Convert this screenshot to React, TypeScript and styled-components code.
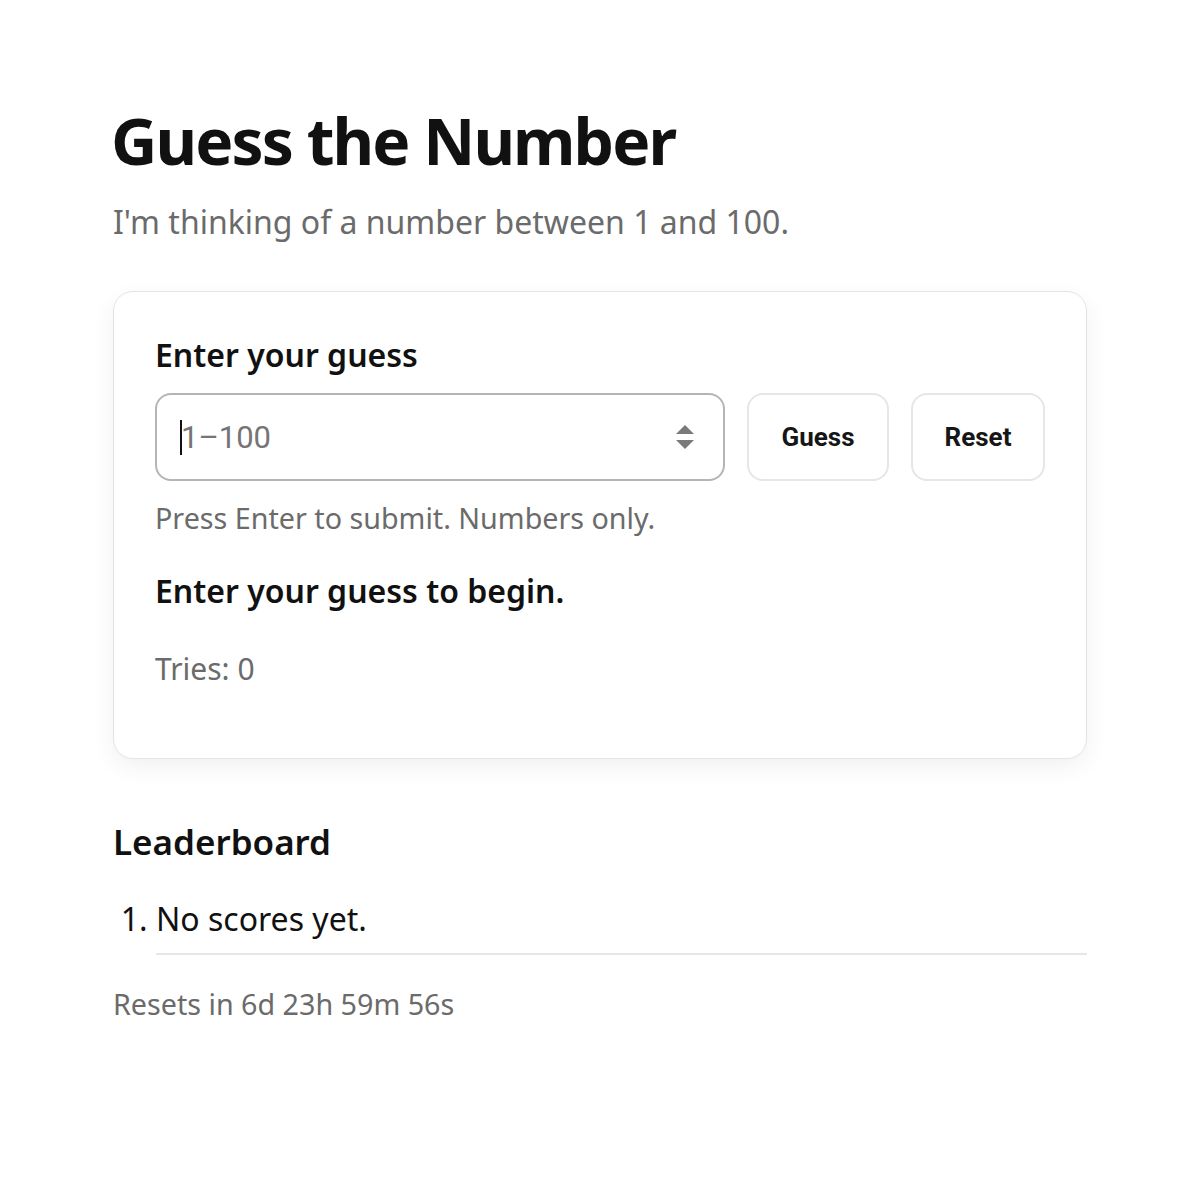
import React from 'react'
import styled, { createGlobalStyle } from 'styled-components'

const Global = createGlobalStyle`
  * { box-sizing: border-box; }
  body {
    margin: 0;
    background: #ffffff;
    color: #111111;
    font-family: "Noto Sans", "DejaVu Sans", sans-serif;
  }
`

export default function App() {
  return (
    <>
      <Global />
      <Page>
        <Title>Guess the Number</Title>
        <Subtitle>I'm thinking of a number between 1 and 100.</Subtitle>

        <Card>
          <Label htmlFor="guess">Enter your guess</Label>
          <Row>
            <Field>
              <Input id="guess" type="text" inputMode="numeric" placeholder="1–100" />
              <Caret />
              <Spinner width="20" height="30" viewBox="0 0 20 30">
                <path d="M10 3 L19 12 L1 12 Z" fill="#7a7a7a" />
                <path d="M1 18 L19 18 L10 27 Z" fill="#7a7a7a" />
              </Spinner>
            </Field>
            <Button $w={142}>Guess</Button>
            <Button $w={134}>Reset</Button>
          </Row>
          <Hint>Press Enter to submit. Numbers only.</Hint>
          <Status>Enter your guess to begin.</Status>
          <Tries>Tries: 0</Tries>
        </Card>

        <Heading>Leaderboard</Heading>
        <List>
          <Item>No scores yet.</Item>
        </List>
        <Countdown>Resets in 6d 23h 59m 56s</Countdown>
      </Page>
    </>
  )
}

const Page = styled.main`
  width: 974px;
  margin: 0 auto;
  padding-top: 101px;
  display: flex;
  flex-direction: column;
`

const Title = styled.h1`
  margin: 0 0 0 -2px;
  font-size: 64px;
  line-height: 80px;
  font-weight: 700;
  letter-spacing: -1.9px;
  color: #111;
`

const Subtitle = styled.p`
  margin: 18px 0 0;
  font-size: 32px;
  line-height: 45px;
  color: #6b6b6b;
`

const Card = styled.section`
  margin-top: 47px;
  border: 1px solid #e4e4e4;
  border-radius: 20px;
  padding: 42px 41px 68px;
  background: #fff;
  box-shadow: 0 8px 24px rgba(0, 0, 0, 0.06);
  display: flex;
  flex-direction: column;
`

const Label = styled.label`
  font-size: 32px;
  line-height: 42px;
  font-weight: 600;
  color: #111;
`

const Row = styled.div`
  margin-top: 17px;
  display: flex;
  gap: 22px;
  height: 88px;
`

const Field = styled.div`
  position: relative;
  flex: none;
  width: 570px;
  height: 88px;
`

const Input = styled.input`
  width: 100%;
  height: 100%;
  border: 2px solid #b5b5b5;
  border-radius: 16px;
  padding: 0 24px;
  font-family: Roboto, "Liberation Sans", sans-serif;
  font-size: 31px;
  color: #111;
  outline: none;
  background: #fff;
  ::placeholder {
    color: #8a8a8a;
  }
`

const Caret = styled.span`
  position: absolute;
  left: 25px;
  top: 27px;
  width: 2px;
  height: 35px;
  background: #111;
`

const Spinner = styled.svg`
  position: absolute;
  right: 30px;
  top: 29px;
`

const Button = styled.button<{ $w: number }>`
  flex: none;
  width: ${p => p.$w}px;
  height: 88px;
  border: 2px solid #e6e6e6;
  border-radius: 16px;
  background: #fff;
  font-family: Roboto, "Liberation Sans", sans-serif;
  font-size: 26px;
  font-weight: 700;
  color: #161616;
  cursor: pointer;
`

const Hint = styled.p`
  margin: 16px 0 0;
  font-size: 28.7px;
  line-height: 42px;
  color: #6b6b6b;
`

const Status = styled.p`
  margin: 31px 0 0;
  font-size: 32px;
  line-height: 42px;
  font-weight: 600;
  color: #111;
`

const Tries = styled.p`
  margin: 36px 0 0;
  font-size: 30px;
  line-height: 42px;
  color: #6b6b6b;
`

const Heading = styled.h2`
  margin: 62px 0 0;
  font-size: 35px;
  line-height: 42px;
  font-weight: 600;
  color: #111;
`

const List = styled.ol`
  margin: 33px 0 0;
  padding-left: 43px;
`

const Item = styled.li`
  font-size: 32px;
  line-height: 45px;
  padding-bottom: 12px;
  border-bottom: 2px solid #e6e6e6;
  color: #111;
`

const Countdown = styled.p`
  margin: 29px 0 0;
  font-size: 28.7px;
  line-height: 40px;
  color: #6b6b6b;
`
